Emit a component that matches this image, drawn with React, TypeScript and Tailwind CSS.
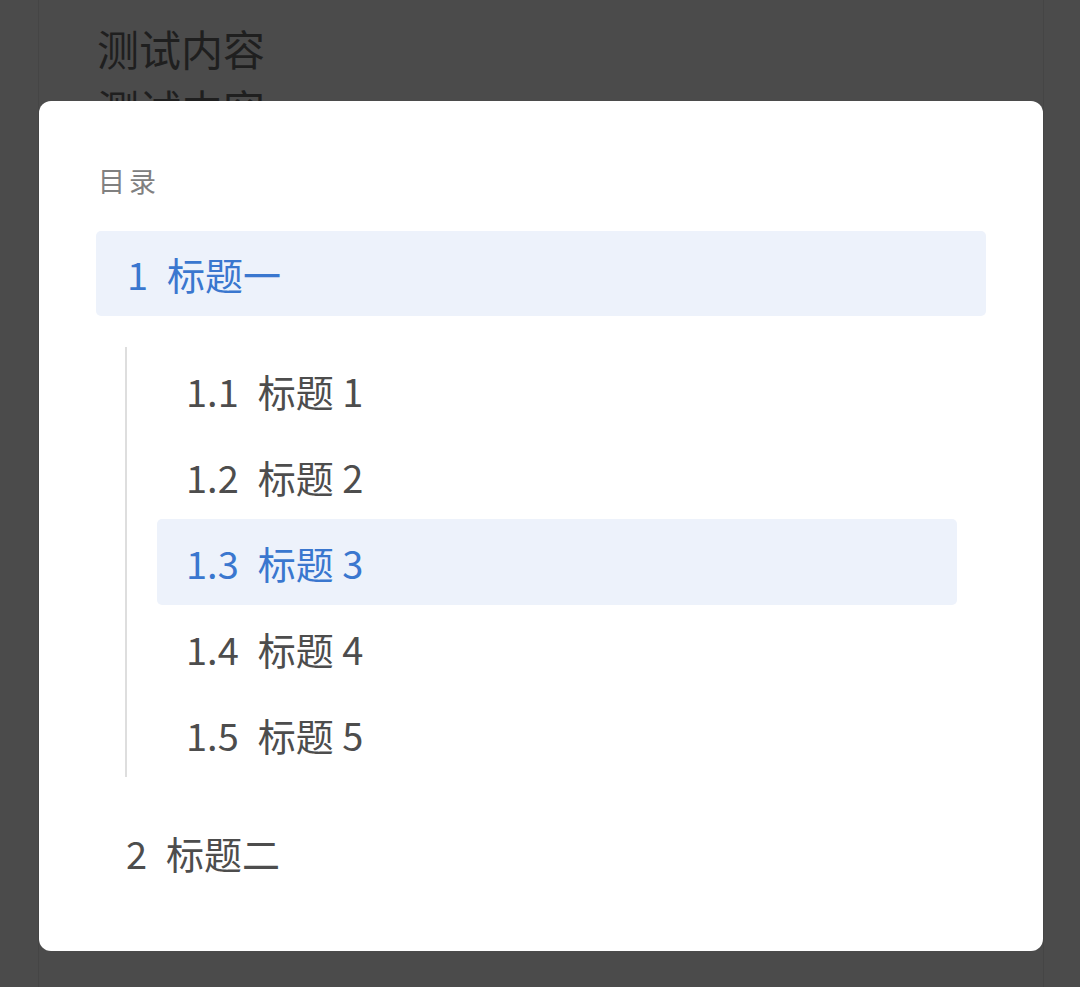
import type { ReactNode } from 'react';

type Item = { num: string; title: string };

const SUB_ITEMS: Item[] = [
  { num: '1.1', title: '标题 1' },
  { num: '1.2', title: '标题 2' },
  { num: '1.3', title: '标题 3' },
  { num: '1.4', title: '标题 4' },
  { num: '1.5', title: '标题 5' },
];

function TocRow({ item, active, children }: { item: Item; active?: boolean; children?: ReactNode }) {
  return (
    <div
      className={`flex items-center h-[86px] pl-[29px] rounded-[5px] text-[38px] ${
        active ? 'bg-[#edf2fb] text-[#3a77cf]' : 'text-[#4d4d4d]'
      }`}
    >
      <span className="mr-[19px]">{item.num}</span>
      <span>{item.title}</span>
      {children}
    </div>
  );
}

export default function App() {
  const activeSub = '1.3';

  return (
    <div
      className="relative w-[1080px] h-[987px] overflow-hidden bg-[#4b4b4b]"
      style={{ fontFamily: '"Noto Sans CJK SC", "Noto Sans", sans-serif' }}
    >
      {/* Page behind the overlay */}
      <div className="ml-[38px] w-[1006px] h-full border-x border-[#454545] pl-[58px] pt-[18px]">
        <p className="text-[42px] leading-[60px] text-[#1f1f1f]">测试内容</p>
        <p className="text-[42px] leading-[60px] text-[#1f1f1f]">测试内容</p>
      </div>

      {/* TOC sheet */}
      <div className="absolute left-[39px] top-[101px] w-[1004px] bg-white rounded-xl px-[57px] pt-[60px] pb-[56px]">
        <div className="h-[40px] flex items-center pl-[2px] text-[27px] tracking-[4px] text-[#808080]">目录</div>

        <div className="mt-[30px] flex items-center h-[85px] pl-[31px] rounded-[5px] bg-[#edf2fb] text-[38px] text-[#3a77cf]">
          <span className="mr-[19px]">1</span>
          <span>标题一</span>
        </div>

        <div className="mt-[31px] ml-[29px] mr-[29px] border-l-2 border-[#dedede] pl-[30px]">
          {SUB_ITEMS.map(item => (
            <TocRow key={item.num} item={item} active={item.num === activeSub} />
          ))}
        </div>

        <div className="mt-[33px] flex items-center h-[85px] pl-[30px] text-[38px] text-[#4d4d4d]">
          <span className="mr-[19px]">2</span>
          <span>标题二</span>
        </div>
      </div>
    </div>
  );
}
